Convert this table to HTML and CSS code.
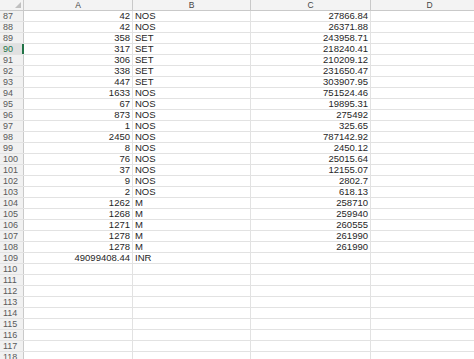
FILE: index.html
```html
<!DOCTYPE html>
<html>
<head>
<meta charset="utf-8">
<link rel="stylesheet" href="styles.css">
</head>
<body>
<div class="sheet">
  <div class="row head">
    <div class="rh corner"><span class="tri"></span></div>
    <div class="c a ch">A</div>
    <div class="c b ch">B</div>
    <div class="c cc ch">C</div>
    <div class="c d ch">D</div>
  </div>
  <div class="row"><div class="rh">87</div><div class="c a num">42</div><div class="c b">NOS</div><div class="c cc num">27866.84</div><div class="c d"></div></div>
  <div class="row"><div class="rh">88</div><div class="c a num">42</div><div class="c b">NOS</div><div class="c cc num">26371.88</div><div class="c d"></div></div>
  <div class="row"><div class="rh">89</div><div class="c a num">358</div><div class="c b">SET</div><div class="c cc num">243958.71</div><div class="c d"></div></div>
  <div class="row"><div class="rh sel">90</div><div class="c a num">317</div><div class="c b">SET</div><div class="c cc num">218240.41</div><div class="c d"></div></div>
  <div class="row"><div class="rh">91</div><div class="c a num">306</div><div class="c b">SET</div><div class="c cc num">210209.12</div><div class="c d"></div></div>
  <div class="row"><div class="rh">92</div><div class="c a num">338</div><div class="c b">SET</div><div class="c cc num">231650.47</div><div class="c d"></div></div>
  <div class="row"><div class="rh">93</div><div class="c a num">447</div><div class="c b">SET</div><div class="c cc num">303907.95</div><div class="c d"></div></div>
  <div class="row"><div class="rh">94</div><div class="c a num">1633</div><div class="c b">NOS</div><div class="c cc num">751524.46</div><div class="c d"></div></div>
  <div class="row"><div class="rh">95</div><div class="c a num">67</div><div class="c b">NOS</div><div class="c cc num">19895.31</div><div class="c d"></div></div>
  <div class="row"><div class="rh">96</div><div class="c a num">873</div><div class="c b">NOS</div><div class="c cc num">275492</div><div class="c d"></div></div>
  <div class="row"><div class="rh">97</div><div class="c a num">1</div><div class="c b">NOS</div><div class="c cc num">325.65</div><div class="c d"></div></div>
  <div class="row"><div class="rh">98</div><div class="c a num">2450</div><div class="c b">NOS</div><div class="c cc num">787142.92</div><div class="c d"></div></div>
  <div class="row"><div class="rh">99</div><div class="c a num">8</div><div class="c b">NOS</div><div class="c cc num">2450.12</div><div class="c d"></div></div>
  <div class="row"><div class="rh">100</div><div class="c a num">76</div><div class="c b">NOS</div><div class="c cc num">25015.64</div><div class="c d"></div></div>
  <div class="row"><div class="rh">101</div><div class="c a num">37</div><div class="c b">NOS</div><div class="c cc num">12155.07</div><div class="c d"></div></div>
  <div class="row"><div class="rh">102</div><div class="c a num">9</div><div class="c b">NOS</div><div class="c cc num">2802.7</div><div class="c d"></div></div>
  <div class="row"><div class="rh">103</div><div class="c a num">2</div><div class="c b">NOS</div><div class="c cc num">618.13</div><div class="c d"></div></div>
  <div class="row"><div class="rh">104</div><div class="c a num">1262</div><div class="c b">M</div><div class="c cc num">258710</div><div class="c d"></div></div>
  <div class="row"><div class="rh">105</div><div class="c a num">1268</div><div class="c b">M</div><div class="c cc num">259940</div><div class="c d"></div></div>
  <div class="row"><div class="rh">106</div><div class="c a num">1271</div><div class="c b">M</div><div class="c cc num">260555</div><div class="c d"></div></div>
  <div class="row"><div class="rh">107</div><div class="c a num">1278</div><div class="c b">M</div><div class="c cc num">261990</div><div class="c d"></div></div>
  <div class="row"><div class="rh">108</div><div class="c a num">1278</div><div class="c b">M</div><div class="c cc num">261990</div><div class="c d"></div></div>
  <div class="row"><div class="rh">109</div><div class="c a num">49099408.44</div><div class="c b">INR</div><div class="c cc num"></div><div class="c d"></div></div>
  <div class="row"><div class="rh">110</div><div class="c a"></div><div class="c b"></div><div class="c cc"></div><div class="c d"></div></div>
  <div class="row"><div class="rh">111</div><div class="c a"></div><div class="c b"></div><div class="c cc"></div><div class="c d"></div></div>
  <div class="row"><div class="rh">112</div><div class="c a"></div><div class="c b"></div><div class="c cc"></div><div class="c d"></div></div>
  <div class="row"><div class="rh">113</div><div class="c a"></div><div class="c b"></div><div class="c cc"></div><div class="c d"></div></div>
  <div class="row"><div class="rh">114</div><div class="c a"></div><div class="c b"></div><div class="c cc"></div><div class="c d"></div></div>
  <div class="row"><div class="rh">115</div><div class="c a"></div><div class="c b"></div><div class="c cc"></div><div class="c d"></div></div>
  <div class="row"><div class="rh">116</div><div class="c a"></div><div class="c b"></div><div class="c cc"></div><div class="c d"></div></div>
  <div class="row"><div class="rh">117</div><div class="c a"></div><div class="c b"></div><div class="c cc"></div><div class="c d"></div></div>
  <div class="row"><div class="rh">118</div><div class="c a"></div><div class="c b"></div><div class="c cc"></div><div class="c d"></div></div>
</div>
</body>
</html>
```

FILE: styles.css
```css
html, body {
  margin: 0;
  padding: 0;
  background: #ffffff;
  overflow: hidden;
}
.sheet {
  font-family: "Liberation Sans", Arial, sans-serif;
  font-size: 9.5px;
  color: #262626;
  width: 474px;
  height: 359px;
  overflow: hidden;
}
.row {
  display: flex;
  height: 11px;
  box-sizing: border-box;
  border-bottom: 1px solid #e2e2e2;
}
.row.head {
  background: #f3f3f3;
  border-bottom: 1px solid #c9c9c9;
}
.rh {
  flex: 0 0 24px;
  box-sizing: border-box;
  background: #f1f1f1;
  border-right: 1px solid #c9c9c9;
  color: #5a5a5a;
  padding-left: 3px;
  line-height: 10px;
  font-size: 9px;
}
.rh.sel {
  color: #217346;
  background: #e1e1e1;
  border-right: 2px solid #217346;
}
.corner {
  position: relative;
  background: #f3f3f3;
}
.tri {
  position: absolute;
  right: 2px;
  bottom: 2px;
  width: 0;
  height: 0;
  border-left: 6px solid transparent;
  border-bottom: 6px solid #c0c0c0;
}
.c {
  box-sizing: border-box;
  border-right: 1px solid #e2e2e2;
  line-height: 10px;
  white-space: nowrap;
  overflow: hidden;
  padding: 0 2px;
}
.a { flex: 0 0 109px; }
.b { flex: 0 0 118px; }
.cc { flex: 0 0 120px; }
.d { flex: 0 0 118px; }
.num { text-align: right; }
.ch {
  text-align: center;
  color: #444;
  font-size: 8.5px;
  border-right: 1px solid #c9c9c9;
}
```
